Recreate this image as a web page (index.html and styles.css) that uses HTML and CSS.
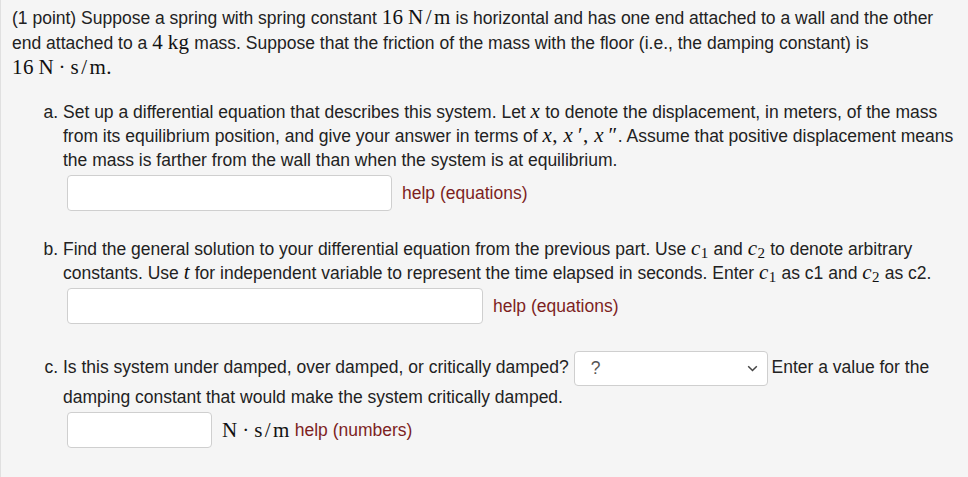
FILE: index.html
```html
<!DOCTYPE html>
<html>
<head>
<meta charset="utf-8">
<link rel="stylesheet" href="styles.css">
</head>
<body>
<div class="problem">
  <p class="intro">(1 point) Suppose a spring with spring constant <span class="m">16&#8201;N<span class="sl">/</span>m</span> is horizontal and has one end attached to a wall and the other end attached to a <span class="m">4&#8201;kg</span> mass. Suppose that the friction of the mass with the floor (i.e., the damping constant) is <span class="m">16&#8201;N&#8201;·&#8201;s<span class="sl">/</span>m.</span></p>
  <ol class="parts">
    <li class="part">Set up a differential equation that describes this system. Let <span class="m"><i>x</i></span> to denote the displacement, in meters, of the mass from its equilibrium position, and give your answer in terms of <span class="m"><i>x</i>, <i>x</i>&#8201;′, <i>x</i>&#8201;″</span>. Assume that positive displacement means the mass is farther from the wall than when the system is at equilibrium.
      <div class="answer">
        <input class="field field-a" type="text">
        <a class="help">help (equations)</a>
      </div>
    </li>
    <li class="part">Find the general solution to your differential equation from the previous part. Use <span class="m"><i>c</i><sub>1</sub></span> and <span class="m"><i>c</i><sub>2</sub></span> to denote arbitrary constants. Use <span class="m"><i>t</i></span> for independent variable to represent the time elapsed in seconds. Enter <span class="m"><i>c</i><sub>1</sub></span> as c1 and <span class="m"><i>c</i><sub>2</sub></span> as c2.
      <div class="answer">
        <input class="field field-b" type="text">
        <a class="help">help (equations)</a>
      </div>
    </li>
    <li class="part part-c">Is this system under damped, over damped, or critically damped? <span class="select"><span class="select-value">?</span><svg class="chev" width="11" height="7" viewBox="0 0 11 7"><path d="M1.2 1.2 L5.5 5.5 L9.8 1.2" fill="none" stroke="#444" stroke-width="1.5"/></svg></span> Enter a value for the damping constant that would make the system critically damped.
      <div class="answer">
        <input class="field field-c" type="text">
        <span class="m unit">N&#8201;·&#8201;s<span class="sl">/</span>m</span>
        <a class="help">help (numbers)</a>
      </div>
    </li>
  </ol>
</div>
</body>
</html>
```
FILE: styles.css
```css
html, body {
  margin: 0;
  padding: 0;
  background: #f5f5f5;
}
body {
  font-family: "Liberation Sans", Arial, sans-serif;
  font-size: 17.5px;
  color: #222;
}
.problem {
  border-left: 1px solid #e0e0e0;
  min-height: 477px;
  box-sizing: border-box;
  padding: 6px 6px 0 11px;
}
.intro {
  margin: 0;
  line-height: 25px;
}
.m {
  font-family: "Liberation Serif", "Times New Roman", serif;
  font-size: 21px;
  line-height: 1;
  letter-spacing: 0.4px;
  white-space: nowrap;
  color: #111;
}
.sl {
  padding: 0 2px;
}
.m i {
  font-style: italic;
}
.m sub {
  font-size: 15px;
  vertical-align: -3px;
  line-height: 0;
}
.parts {
  list-style: lower-alpha;
  margin: 19px 0 0 0;
  padding-left: 51px;
  line-height: 24px;
}
.part + .part {
  margin-top: 26px;
}
.part + .part-c {
  margin-top: 28px;
}
.answer {
  display: flex;
  align-items: center;
  gap: 10px;
  margin: 3px 0 0 4px;
}
.field {
  box-sizing: border-box;
  height: 36px;
  border: 1px solid #cfcfcf;
  border-radius: 4px;
  background: #fff;
  margin: 0;
  padding: 4px 6px;
  font: inherit;
}
.field-a { width: 325px; }
.field-b { width: 416px; }
.field-c { width: 145px; }
.help {
  color: #7d1f1f;
  text-decoration: none;
}
.unit {
  margin-right: -5px;
}
.select {
  display: inline-flex;
  align-items: center;
  justify-content: space-between;
  box-sizing: border-box;
  width: 194px;
  height: 35px;
  vertical-align: middle;
  border: 1px solid #cfcfcf;
  border-radius: 4px;
  background: #fff;
  padding: 0 9px 0 16px;
  margin: -1px -1px -1px 0;
  line-height: 1;
  color: #555;
}
.chev {
  display: block;
}
```
